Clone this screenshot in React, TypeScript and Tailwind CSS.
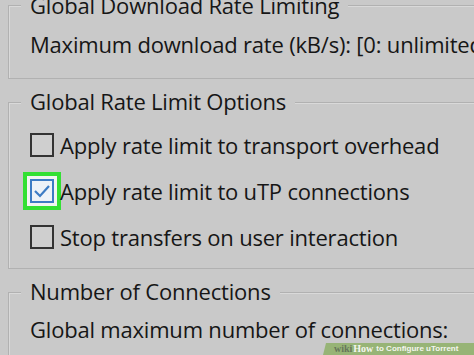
import React from "react";

const FONT = { fontFamily: '"Open Sans", "Noto Sans", sans-serif' };
const TXT = "text-[22px] leading-[26px] tracking-[-0.2px] text-[#161616]";

function Legend({ children, mt }: { children: React.ReactNode; mt: string }) {
  return (
    <div className={`${mt} ml-[12px] w-fit bg-[#c9c9c9] px-[9px] ${TXT}`}>
      {children}
    </div>
  );
}

function Box({ checked }: { checked?: boolean }) {
  if (checked) {
    return (
      <span className="flex h-[24px] w-[24px] shrink-0 items-center justify-center border-2 border-[#3d7cc4] bg-[#eef3f8] shadow-[0_0_0_3px_#f2f5f2] outline-[4px] outline-solid outline-[#33e033] outline-offset-[3px]">
        <svg width="18" height="14" viewBox="0 0 18 14" fill="none">
          <polyline points="2,7 7,12 16,2" stroke="#3d7cc4" strokeWidth="2.2" strokeLinejoin="miter" />
        </svg>
      </span>
    );
  }
  return <span className="h-[24px] w-[24px] shrink-0 border-2 border-[#333333] bg-[#cfcfcf]" />;
}

function Row({ label, checked }: { label: string; checked?: boolean }) {
  return (
    <div className="flex h-[46px] items-center gap-[6px] pl-[21px]">
      <Box checked={checked} />
      <span className={`whitespace-nowrap ${TXT}`}>{label}</span>
    </div>
  );
}

const GROUP = "ml-[8px] border-l border-[#b1b1b1] shadow-[inset_1px_1px_0_#d9d9d9]";

export default function App() {
  return (
    <div className="relative h-[355px] w-[474px] overflow-hidden bg-[#c9c9c9] pt-[5px]" style={FONT}>
      <div className={`${GROUP} h-[74px] border-y`}>
        <Legend mt="-mt-[14px]">Global Download Rate Limiting</Legend>
        <div className={`mt-[13px] whitespace-nowrap pl-[21px] ${TXT}`}>
          Maximum download rate (kB/s): [0: unlimited]
        </div>
      </div>

      <div className={`${GROUP} mt-[23px] h-[167px] border-y`}>
        <Legend mt="-mt-[15px]">Global Rate Limit Options</Legend>
        <div className="mt-[8px] flex flex-col">
          <Row label="Apply rate limit to transport overhead" />
          <Row label="Apply rate limit to uTP connections" checked />
          <Row label="Stop transfers on user interaction" />
        </div>
      </div>

      <div className={`${GROUP} mt-[23px] h-[80px] border-t`}>
        <Legend mt="-mt-[15px]">Number of Connections</Legend>
        <div className={`mt-[12px] whitespace-nowrap pl-[21px] ${TXT}`}>
          Global maximum number of connections:
        </div>
      </div>

      <div className="absolute bottom-0 right-0 flex h-[12px] w-[151px] items-center gap-[1px] bg-[#97b476] pl-[11px] [clip-path:polygon(3px_0,100%_0,100%_100%,0_100%)]">
        <span className="text-[10px] font-bold leading-[12px] text-[#66765a]" style={{ fontFamily: '"Liberation Serif", serif' }}>
          wiki
        </span>
        <span className="text-[10px] font-bold leading-[12px] text-[#f4f6ef]" style={{ fontFamily: '"Liberation Serif", serif' }}>
          How
        </span>
        <span className="ml-[2px] whitespace-nowrap text-[8px] font-bold leading-[12px] text-[#f4f6ef]" style={{ fontFamily: '"Liberation Sans", sans-serif' }}>
          to Configure uTorrent
        </span>
      </div>
    </div>
  );
}
